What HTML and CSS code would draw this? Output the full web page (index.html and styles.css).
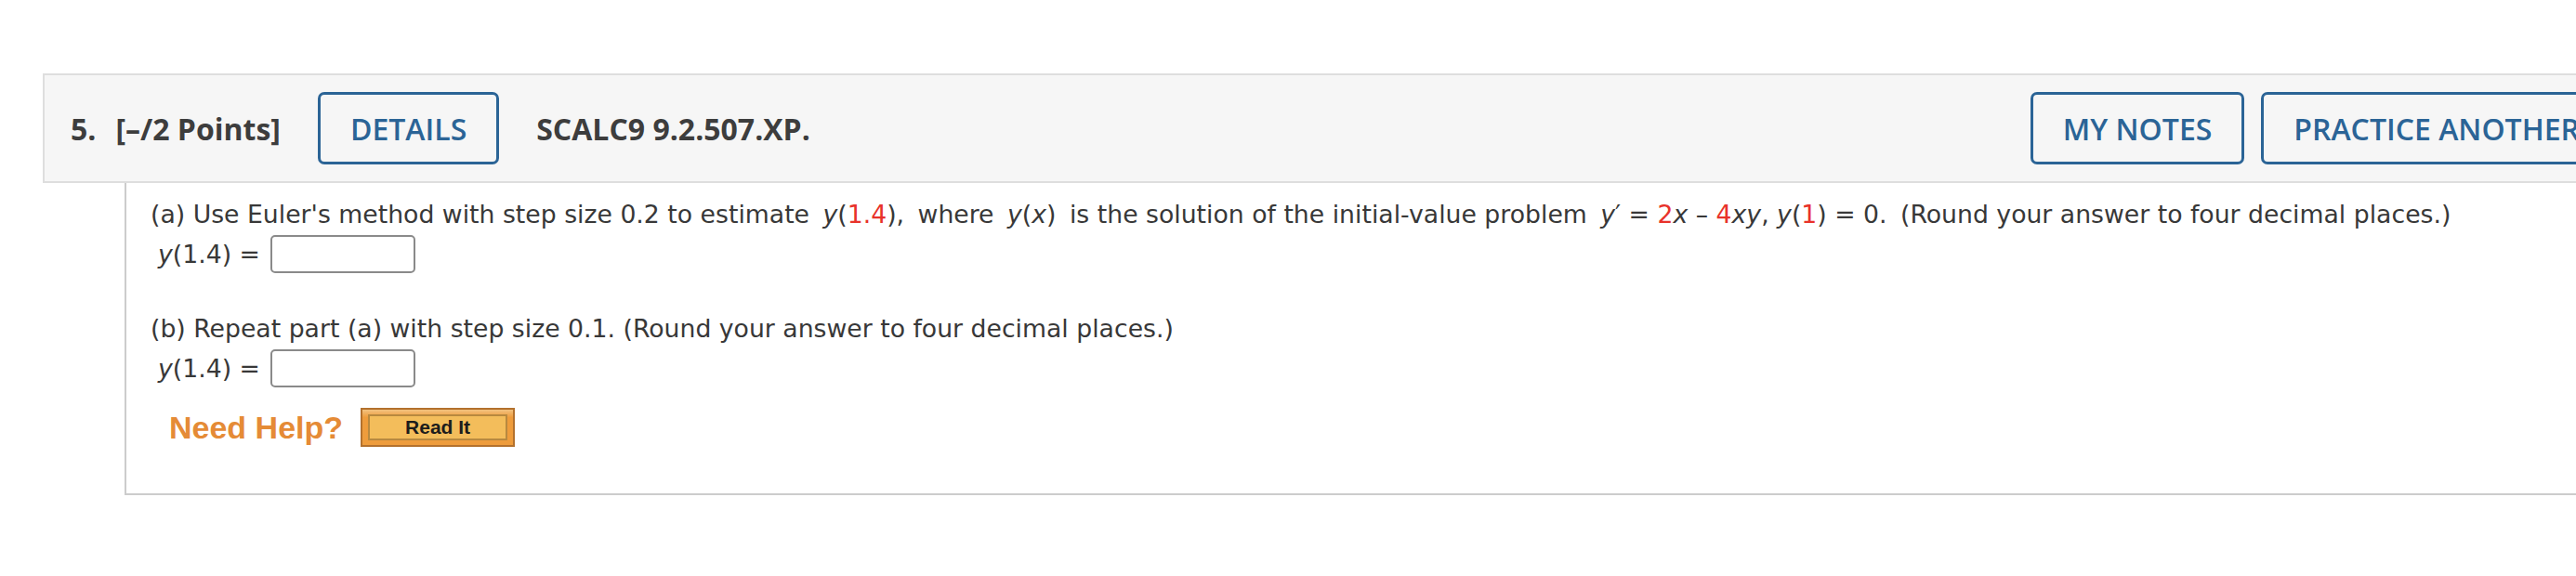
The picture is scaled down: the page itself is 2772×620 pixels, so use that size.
FILE: index.html
```html
<!DOCTYPE html>
<html lang="en">
<head>
<meta charset="utf-8">
<title>SCALC9 9.2.507.XP.</title>
<link rel="stylesheet" href="styles.css">
</head>
<body>
<div class="page">
  <div class="question">
    <div class="q-header">
      <div class="q-points"><span>5.</span><span class="pts">[–/2 Points]</span></div>
      <button class="btn details">DETAILS</button>
      <div class="q-id">SCALC9 9.2.507.XP.</div>
      <div class="q-actions">
        <button class="btn">MY NOTES</button>
        <button class="btn">PRACTICE ANOTHER</button>
      </div>
    </div>
    <div class="q-body">
      <p class="line">(a) Use Euler's method with step size 0.2 to estimate <span class="m"><i>y</i>(<span class="red">1.4</span>),</span> where <span class="m"><i>y</i>(<i>x</i>)</span> is the solution of the initial-value problem <span class="m"><i>y</i>′ = <span class="red">2</span><i>x</i> – <span class="red">4</span><i>xy</i>, <i>y</i>(<span class="red">1</span>) = 0.</span> (Round your answer to four decimal places.)</p>
      <div class="ans"><span class="m0"><i>y</i>(1.4) =</span><input class="box" type="text" aria-label="y(1.4) answer a"></div>
      <p class="line part-b">(b) Repeat part (a) with step size 0.1. (Round your answer to four decimal places.)</p>
      <div class="ans"><span class="m0"><i>y</i>(1.4) =</span><input class="box" type="text" aria-label="y(1.4) answer b"></div>
      <div class="help">
        <span class="need">Need Help?</span>
        <span class="readit"><span class="readit-inner">Read It</span></span>
      </div>
    </div>
  </div>
</div>
</body>
</html>
```
FILE: styles.css
```css
html, body {
  margin: 0;
  padding: 0;
  overflow: hidden;
  background: #ffffff;
}

.page {
  padding: 79px 0 0 46px;
}

.question {
  width: 2795px;
}

.q-header {
  display: flex;
  align-items: center;
  height: 114px;
  background: #f6f6f6;
  border: 2px solid #dedede;
  padding: 0 28px;
  font-family: "Open Sans", "Liberation Sans", sans-serif;
  color: #3d3d3d;
}

.q-points {
  font-size: 32px;
  font-weight: 700;
  white-space: nowrap;
}

.q-points .pts {
  margin-left: 21px;
}

.btn {
  box-sizing: border-box;
  height: 78px;
  padding: 0 32px;
  background: transparent;
  border: 3px solid #2b6496;
  border-radius: 7px;
  color: #2b6496;
  font-family: "Open Sans", "Liberation Sans", sans-serif;
  font-size: 32px;
  font-weight: 600;
  white-space: nowrap;
}

.details {
  margin-left: 40px;
}

.q-id {
  margin-left: 40px;
  font-size: 32px;
  font-weight: 700;
  white-space: nowrap;
}

.q-actions {
  margin-left: auto;
  display: flex;
  gap: 18px;
}

.q-body {
  margin-left: 88px;
  border-left: 2px solid #cccccc;
  border-bottom: 2px solid #cccccc;
  padding: 12px 0 50px 26px;
  font-family: Verdana, "DejaVu Sans", sans-serif;
  font-size: 26.7px;
  color: #383838;
}

.line {
  margin: 0;
  line-height: 43px;
  white-space: nowrap;
}

.m {
  margin: 0 6px;
}

.m0 {
  margin-left: 8px;
}

.red {
  color: #e8322a;
}

.ans {
  display: flex;
  align-items: center;
  height: 43px;
  line-height: 43px;
}

.box {
  box-sizing: border-box;
  width: 156px;
  height: 41px;
  margin: 0 0 0 11px;
  border: 2px solid #8a8a8a;
  border-radius: 5px;
  background: #ffffff;
}

.part-b {
  margin-top: 37px;
}

.help {
  display: flex;
  align-items: center;
  margin-top: 21px;
  padding-left: 20px;
}

.need {
  font-family: "Liberation Sans", Arial, sans-serif;
  font-weight: 700;
  font-size: 34px;
  color: #e58b36;
}

.readit {
  box-sizing: border-box;
  display: flex;
  align-items: center;
  justify-content: center;
  width: 166px;
  height: 42px;
  margin-left: 19px;
  padding: 5px 6px;
  border: 2px solid #b3712d;
  background: linear-gradient(#f2c27f 0%, #ee9c3c 22%, #ee9c3c 100%);
}

.readit-inner {
  box-sizing: border-box;
  display: flex;
  align-items: center;
  justify-content: center;
  width: 100%;
  height: 100%;
  border: 2px solid #b8893f;
  background: #f3bd5b;
  font-family: "Liberation Sans", Arial, sans-serif;
  font-weight: 700;
  font-size: 21px;
  color: #1c1c1c;
}
```
